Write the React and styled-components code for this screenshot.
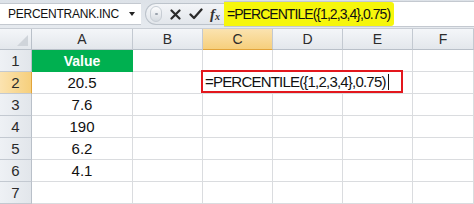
import React from "react";
import styled, { createGlobalStyle, css } from "styled-components";

const Global = createGlobalStyle`
  html, body { margin: 0; padding: 0; background: #ffffff; }
  body { font-family: "Liberation Sans", Arial, sans-serif; overflow: hidden; }
`;

const Page = styled.div`
  width: 474px;
  height: 204px;
  overflow: hidden;
  display: flex;
  flex-direction: column;
`;

const Bar = styled.div`
  height: 30px;
  display: flex;
  align-items: center;
  background: linear-gradient(#dde2e8, #e6eaef);
  border-bottom: 1px solid #c9ced5;
  box-sizing: border-box;
`;

const NameBox = styled.div`
  width: 141px;
  height: 22px;
  background: #fff;
  display: flex;
  align-items: center;
  justify-content: space-between;
  padding: 0 6px 0 8px;
  box-sizing: border-box;
  font-size: 12px;
  letter-spacing: -0.25px;
  color: #111;
  border-top: 1px solid #c4c9d0;
  border-bottom: 1px solid #c4c9d0;
`;

const Caret = styled.span`
  width: 0;
  height: 0;
  border-left: 3.5px solid transparent;
  border-right: 3.5px solid transparent;
  border-top: 4px solid #222;
`;

const Pill = styled.div`
  margin-left: 4px;
  width: 79px;
  height: 22px;
  display: flex;
  align-items: center;
  border-radius: 11px 0 0 11px;
  background: linear-gradient(#f3f5f8, #e2e6eb);
  border: 1px solid #bcc3cb;
  border-right: none;
  box-sizing: border-box;
  padding-left: 4px;
  gap: 6px;
`;

const Grip = styled.span`
  width: 10px;
  height: 14px;
  border-radius: 6px;
  background: linear-gradient(#fdfdfe, #d5dae0);
  border: 1px solid #c7cdd4;
  display: flex;
  align-items: center;
  justify-content: center;
  &::after {
    content: "";
    width: 3px;
    height: 2px;
    background: #9aa2ac;
    border-radius: 1px;
  }
`;

const Icon = styled.span`
  display: flex;
  align-items: center;
  justify-content: center;
  width: ${(p) => p.$w || 14}px;
`;

const Fx = styled.span`
  font-family: "Liberation Serif", "Times New Roman", serif;
  font-style: italic;
  font-weight: bold;
  font-size: 15px;
  color: #333;
  sub {
    font-size: 10px;
    vertical-align: -1px;
  }
`;

const FormulaField = styled.div`
  flex: 1;
  height: 26px;
  background: #fff;
  display: flex;
  align-items: center;
  border-top: 1px solid #c4c9d0;
  border-bottom: 1px solid #c4c9d0;
  box-sizing: border-box;
`;

const Highlight = styled.span`
  background: #f6f60c;
  height: 100%;
  display: flex;
  align-items: center;
  padding: 0 4px 0 3px;
  font-size: 14px;
  letter-spacing: -0.95px;
  color: #111;
  border-radius: 0 3px 3px 0;
`;

const Sheet = styled.div`
  display: grid;
  grid-template-columns: 32px 101px 70px 70px 70px 70px 1fr;
  grid-auto-rows: 22px;
  grid-template-rows: 21px;
`;

const headerBase = css`
  display: flex;
  align-items: center;
  justify-content: center;
  font-size: 14px;
  color: #2b2b2b;
  box-sizing: border-box;
`;

const ColHead = styled.div`
  ${headerBase}
  background: ${(p) =>
    p.$active
      ? "linear-gradient(#fbe3b0, #f6cf7c)"
      : "linear-gradient(#f4f6f9, #e3e7ec)"};
  border-right: 1px solid #c3c9d1;
  border-bottom: 1px solid ${(p) => (p.$active ? "#e2a43a" : "#b9c0c9")};
`;

const Corner = styled.div`
  background: linear-gradient(#f4f6f9, #e3e7ec);
  border-right: 1px solid #b9c0c9;
  border-bottom: 1px solid #b9c0c9;
  box-sizing: border-box;
  display: flex;
  align-items: flex-end;
  justify-content: flex-end;
  padding: 0 3px 3px 0;
  &::after {
    content: "";
    width: 0;
    height: 0;
    border-left: 11px solid transparent;
    border-bottom: 11px solid #cfd4da;
  }
`;

const RowHead = styled.div`
  ${headerBase}
  font-size: 15px;
  background: ${(p) =>
    p.$active
      ? "linear-gradient(90deg, #fbe3b0, #f6cf7c)"
      : "linear-gradient(90deg, #eef1f5, #e2e6eb)"};
  border-right: 1px solid ${(p) => (p.$active ? "#e2a43a" : "#b9c0c9")};
  border-bottom: 1px solid #c3c9d1;
`;

const Cell = styled.div`
  position: relative;
  display: flex;
  align-items: center;
  justify-content: center;
  font-size: 15px;
  color: #111;
  border-right: 1px solid #dadcdf;
  border-bottom: 1px solid #dadcdf;
  box-sizing: border-box;
  ${(p) =>
    p.$green &&
    css`
      background: #00b050;
      color: #fff;
      font-weight: bold;
      font-size: 14px;
      border-color: #00b050;
    `}
`;

const EditBox = styled.div`
  position: absolute;
  left: -2px;
  top: -2px;
  width: 202px;
  height: 23px;
  border: 2.5px solid #e3171d;
  box-sizing: border-box;
  background: #fff;
  display: flex;
  align-items: center;
  padding-left: 2px;
  font-size: 15px;
  letter-spacing: -0.8px;
  color: #111;
  z-index: 2;
  white-space: nowrap;
`;

const CursorLine = styled.span`
  display: inline-block;
  width: 1px;
  height: 16px;
  background: #111;
  margin-left: 2px;
`;

const cols = ["A", "B", "C", "D", "E", "F"];
const values = ["Value", "20.5", "7.6", "190", "6.2", "4.1", ""];

export default function App() {
  return (
    <Page>
      <Global />
      <Bar>
        <NameBox>
          <span>PERCENTRANK.INC</span>
          <Caret />
        </NameBox>
        <Pill>
          <Grip />
          <Icon $w={14}>
            <svg width="11" height="11" viewBox="0 0 11 11">
              <path d="M1.5 1.5 L9.5 9.5 M9.5 1.5 L1.5 9.5" stroke="#2a2a2a" strokeWidth="2.2" strokeLinecap="round" />
            </svg>
          </Icon>
          <Icon $w={16}>
            <svg width="14" height="12" viewBox="0 0 14 12">
              <path d="M1.5 6.5 L5 10 L12.5 1.5" stroke="#2a2a2a" strokeWidth="2.3" fill="none" strokeLinecap="round" strokeLinejoin="round" />
            </svg>
          </Icon>
          <Fx>
            f<sub>x</sub>
          </Fx>
        </Pill>
        <FormulaField>
          <Highlight>=PERCENTILE({"{"}1,2,3,4{"}"},0.75)</Highlight>
        </FormulaField>
      </Bar>
      <Sheet>
        <Corner />
        {cols.map((c) => (
          <ColHead key={c} $active={c === "C"}>
            {c}
          </ColHead>
        ))}
        {values.map((v, i) => (
          <React.Fragment key={i}>
            <RowHead $active={i === 1}>{i + 1}</RowHead>
            <Cell $green={i === 0}>{v}</Cell>
            <Cell />
            <Cell>
              {i === 1 && (
                <EditBox>
                  =PERCENTILE({"{"}1,2,3,4{"}"},0.75)
                  <CursorLine />
                </EditBox>
              )}
            </Cell>
            <Cell />
            <Cell />
            <Cell />
          </React.Fragment>
        ))}
      </Sheet>
    </Page>
  );
}
